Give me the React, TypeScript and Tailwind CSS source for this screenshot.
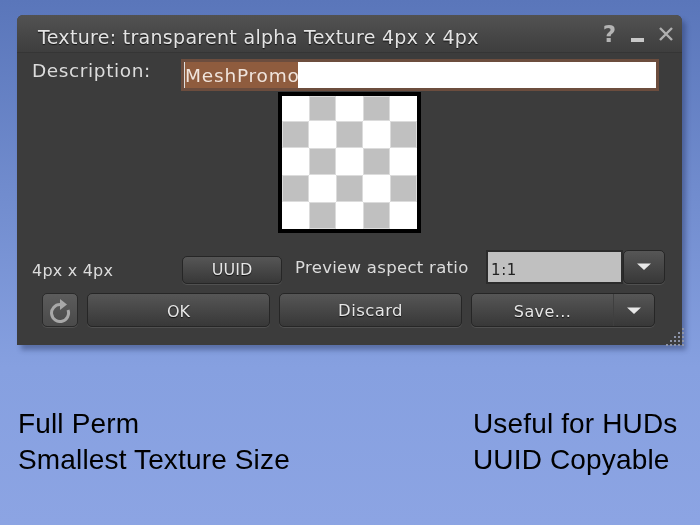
const FONT = "font-['DejaVu_Sans',sans-serif]";

const btn =
  "flex items-center justify-center rounded-[5px] border border-[#262626] bg-gradient-to-b from-[#565656] to-[#383838] text-[#e6e6e6] shadow-[0_1px_0_#505050] [text-shadow:0_1px_1px_#111]";

const cells = Array.from({ length: 30 }, (_, i) => i);

function Arrow() {
  return (
    <svg width="14" height="7" viewBox="0 0 14 7">
      <path d="M0 0.5H14L7 7Z" fill="#e8e8e8" />
    </svg>
  );
}

export default function App() {
  return (
    <div className={`relative flex h-[525px] w-[700px] flex-col overflow-hidden bg-gradient-to-b from-[#5a76ba] via-[#86a0e0] via-70% to-[#8ca4e3] pl-[17px] pt-[15px] ${FONT}`}>
      <div className="relative flex h-[330px] w-[665px] flex-col rounded-t-[6px] bg-[#3c3c3c] shadow-[4px_5px_5px_rgba(40,55,100,0.45)] blur-[0.4px]">
        {/* title bar */}
        <div className="flex h-[38px] shrink-0 items-center justify-between rounded-t-[6px] border-b border-[#353535] bg-gradient-to-b from-[#525252] to-[#3e3e3e] pl-[21px] pr-[9px]">
          <span className="mt-[8px] text-[19px] tracking-[0.3px] text-[#e4e4e4] [text-shadow:0_1px_1px_#111]">
            Texture: transparent alpha Texture 4px x 4px
          </span>
          <div className="flex items-center gap-[15px] text-[#b4b4b4]">
            <span className="mt-[2px] text-[23px] font-semibold leading-none">?</span>
            <span className="mt-[12px] h-[4px] w-[13px] bg-[#c8c8c8]" />
            <svg width="14" height="14" viewBox="0 0 14 14">
              <path d="M1 1L13 13M13 1L1 13" stroke="#b0b0b0" strokeWidth="2.4" />
            </svg>
          </div>
        </div>

        {/* description */}
        <div className="flex items-start pl-[15px] pr-[23px] pt-[6px]">
          <span className="w-[149px] text-[18.5px] leading-[24px] tracking-[0.6px] text-[#dcdcdc]">Description:</span>
          <div className="flex h-[32px] flex-1 items-stretch border-[3px] border-[#6c4d3e] bg-white">
            <span className="flex h-full w-[114px] items-center border-l border-[#dddddd] bg-[#8f5c3e] pt-[2px] text-[18.5px] tracking-[0.8px] text-[#f0e4dc]">
              MeshPromo
            </span>
          </div>
        </div>

        {/* preview */}
        <div className="ml-[261px] mt-px grid h-[141px] w-[143px] grid-cols-5 grid-rows-[25px_repeat(4,27px)_3px] overflow-hidden border-4 border-black bg-white">
          {cells.map((i) => (
            <div key={i} className={i % 2 === 1 ? "border border-[#dcdcdc] bg-[#c0c0c0]" : "bg-white"} />
          ))}
        </div>

        {/* info row */}
        <div className="mt-[17px] flex h-[34px] items-center pl-[15px]">
          <span className="w-[150px] pt-[7px] text-[16px] tracking-[0.2px] text-[#dcdcdc]">4px x 4px</span>
          <button className={`${btn} mt-[5px] h-[28px] w-[100px] text-[16px]`}>UUID</button>
          <span className="ml-[13px] w-[191px] pt-[2px] text-[16.5px] tracking-[0.3px] text-[#dcdcdc]">Preview aspect ratio</span>
          <div className="flex h-[34px] w-[179px] items-stretch">
            <div className="flex w-[137px] items-end border-2 border-[#2c2c2c] bg-[#c0c0c0] pb-px pl-[3px] text-[15px] tracking-[0.6px] text-[#222222]">
              1:1
            </div>
            <div className={`${btn} flex-1 pb-[2px]`}>
              <Arrow />
            </div>
          </div>
        </div>

        {/* buttons */}
        <div className="mt-[9px] flex h-[34px] pl-[25px]">
          <button className="flex w-[36px] items-center justify-center rounded-[5px] border border-[#2a2a2a] bg-gradient-to-b from-[#5c5c5c] to-[#4a4a4a] shadow-[0_1px_0_#505050]">
            <svg width="26" height="26" viewBox="0 0 26 26">
              <path d="M13 7.5A8.5 8.5 0 1 0 21 13" fill="none" stroke="#a8a8a8" strokeWidth="3" />
              <path d="M13 2L20 7.5L13 13Z" fill="#a8a8a8" />
            </svg>
          </button>
          <button className={`${btn} ml-[9px] w-[183px] pt-[3px] text-[16px]`}>OK</button>
          <button className={`${btn} ml-[9px] w-[183px] pt-[3px] text-[16.5px] tracking-[0.4px]`}>Discard</button>
          <div className={`${btn} ml-[9px] w-[184px] items-stretch`}>
            <span className="flex flex-1 items-center justify-center border-r border-[#3f3f3f] pt-[3px] text-[16px] tracking-[0.4px]">Save...</span>
            <span className="flex w-[40px] items-center justify-center">
              <Arrow />
            </span>
          </div>
        </div>

        {/* resize grip */}
        <svg width="20" height="20" viewBox="0 0 20 20" className="absolute -bottom-px -right-[2px]">
          <path d="M18 2h2v2h-2zM14 6h2v2h-2zM18 6h2v2h-2zM10 10h2v2h-2zM14 10h2v2h-2zM18 10h2v2h-2zM6 14h2v2H6zM10 14h2v2h-2zM14 14h2v2h-2zM18 14h2v2h-2zM2 18h2v2H2zM6 18h2v2H6zM10 18h2v2h-2zM14 18h2v2h-2zM18 18h2v2h-2z" fill="#8c93a8" />
        </svg>
      </div>

      {/* caption */}
      <div className="ml-px mt-[61px] flex font-['Liberation_Sans',sans-serif] text-[28px] leading-[36px] tracking-[0.15px] text-black blur-[0.3px]">
        <div className="w-[455px]">
          <p>Full Perm</p>
          <p>Smallest Texture Size</p>
        </div>
        <div>
          <p>Useful for HUDs</p>
          <p>UUID Copyable</p>
        </div>
      </div>
    </div>
  );
}
